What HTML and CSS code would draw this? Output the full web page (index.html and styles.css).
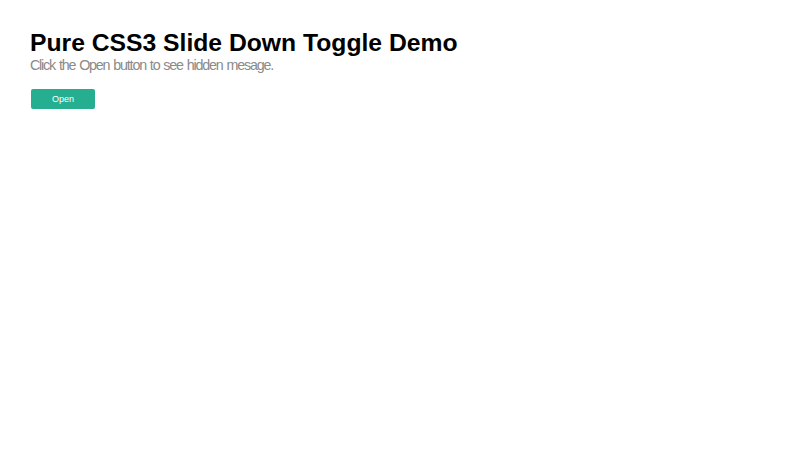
FILE: index.html
```html
<!DOCTYPE html>
<html>
<head>
<meta charset="utf-8">
<link rel="stylesheet" href="styles.css">
</head>
<body>
<div class="page">
  <h1 class="title">Pure CSS3 Slide Down Toggle Demo</h1>
  <p class="subtitle">Click the Open button to see hidden mesage.</p>
  <button class="open-btn">Open</button>
</div>
</body>
</html>
```
FILE: styles.css
```css
html, body {
  margin: 0;
  padding: 0;
  background: #fff;
}
body {
  font-family: "Liberation Sans", Arial, sans-serif;
}
.page {
  padding: 30px 30px;
  display: flex;
  flex-direction: column;
  align-items: flex-start;
}
.title {
  margin: 0;
  font-size: 24.7px;
  line-height: 26px;
  font-weight: bold;
  color: #000;
}
.subtitle {
  margin: 0;
  font-size: 14.3px;
  line-height: 18px;
  color: #8a8a8a;
  letter-spacing: -1.2px;
  word-spacing: 1.2px;
}
.open-btn {
  margin: 15px 0 0 1px;
  width: 64px;
  height: 20px;
  border: none;
  border-radius: 2px;
  background: #26ae90;
  color: #fff;
  font-family: "Liberation Sans", Arial, sans-serif;
  font-size: 9px;
  padding: 0;
}
```
